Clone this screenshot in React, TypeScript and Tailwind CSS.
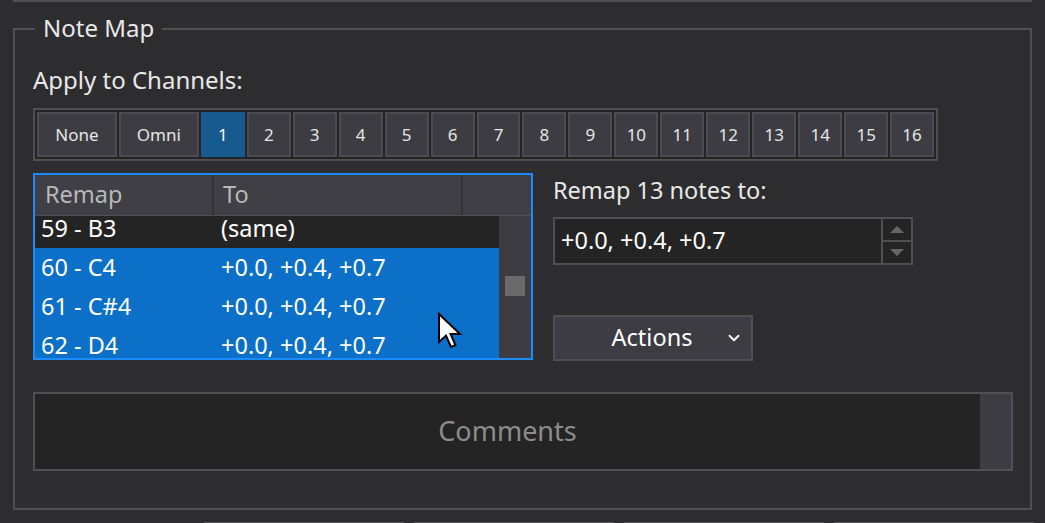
import React from 'react';
import { ChevronDown } from 'lucide-react';

const channels = ['1', '2', '3', '4', '5', '6', '7', '8', '9', '10', '11', '12', '13', '14', '15', '16'];

const rows = [
  { note: '59 - B3', to: '(same)', selected: false },
  { note: '60 - C4', to: '+0.0, +0.4, +0.7', selected: true },
  { note: '61 - C#4', to: '+0.0, +0.4, +0.7', selected: true },
  { note: '62 - D4', to: '+0.0, +0.4, +0.7', selected: true },
];

const ChannelButton: React.FC<{ label: string; active?: boolean; wide?: boolean }> = ({ label, active, wide }) => (
  <div
    className={`flex h-[45px] items-center justify-center border-2 text-[17px] ${wide ? 'w-[80px]' : 'w-[44px]'} ${
      active ? 'border-[#175a90] bg-[#175a90] text-white' : 'border-[#4b4b50] bg-[#3c3c42] text-[#e6e6e6]'
    }`}
  >
    {label}
  </div>
);

const Cursor = () => (
  <svg width="26" height="38" viewBox="0 0 13 19" className="absolute left-[437px] top-[312px]">
    <path
      d="M1 1 L1 15 L4.5 11.8 L7 17.5 L9.2 16.6 L6.8 11 L11.5 11 Z"
      fill="white"
      stroke="black"
      strokeWidth="1"
      strokeLinejoin="miter"
    />
  </svg>
);

export default function App() {
  return (
    <div
      className="relative h-[523px] w-[1045px] overflow-hidden bg-[#2d2d30] text-[#e8e8e8]"
      style={{ fontFamily: '"Noto Sans", "Open Sans", sans-serif' }}
    >
      {/* previous group edge */}
      <div className="mx-[13px] h-[2px] bg-[#505052]" />

      {/* Note Map group */}
      <div className="relative mx-[13px] mt-[26px] h-[482px] border-2 border-[#505052] px-[18px]">
        <div className="absolute left-[20px] top-[-18px] bg-[#2d2d30] px-[8px] text-[24px] leading-[32px]">Note Map</div>

        <div className="mt-[36px] text-[24px] leading-[28px]">Apply to Channels:</div>

        {/* channel selector */}
        <div className="mt-[14px] flex w-[905px] gap-[2px] border-2 border-[#505052] bg-[#242426] p-[2px]">
          <ChannelButton label="None" wide />
          <ChannelButton label="Omni" wide />
          {channels.map((c) => (
            <ChannelButton key={c} label={c} active={c === '1'} />
          ))}
        </div>

        <div className="mt-[12px] flex gap-[20px]">
          {/* remap table */}
          <div className="flex h-[187px] w-[500px] flex-col border-2 border-[#1a8cff] bg-[#242424]">
            <div className="flex h-[41px] border-b border-[#505052] bg-[#3f3f45] text-[23.5px] text-[#b8b8b8]">
              <div className="flex w-[179px] items-center border-r-2 border-[#333336] pl-[10px]">Remap</div>
              <div className="flex w-[249px] items-center border-r-2 border-[#333336] pl-[9px]">To</div>
              <div className="flex-1" />
            </div>
            <div className="flex flex-1 overflow-hidden">
              <div className="flex-1 overflow-hidden">
                <div className="mt-[-6px]">
                  {rows.map((r, i) => (
                    <div
                      key={r.note}
                      className={`flex items-center text-[23.5px] text-white ${i === 0 ? 'h-[38px]' : 'h-[39px]'} ${
                        r.selected ? 'bg-[#0c6fc8]' : 'bg-[#242424]'
                      }`}
                    >
                      <div className="w-[179px] pl-[6px]">{r.note}</div>
                      <div className="pl-[7px]">{r.to}</div>
                    </div>
                  ))}
                </div>
              </div>
              <div className="w-[32px] bg-[#3c3c42] pl-[6px] pt-[60px]">
                <div className="h-[20px] w-[20px] bg-[#6a6a6a]" />
              </div>
            </div>
          </div>

          {/* right side */}
          <div className="flex flex-col">
            <div className="mt-[2px] text-[23.5px] leading-[30px]">Remap 13 notes to:</div>
            <div className="mt-[12px] flex h-[48px] w-[360px] border-2 border-[#505052] bg-[#242424]">
              <div className="flex flex-1 items-center pl-[6px] text-[23.5px] text-white">+0.0, +0.4, +0.7</div>
              <div className="flex w-[30px] flex-col border-l-2 border-[#505052]">
                <div className="flex flex-1 items-center justify-center border-b-2 border-[#505052]">
                  <svg width="16" height="9" viewBox="0 0 16 9">
                    <path d="M8 1 L15 8 L1 8 Z" fill="#666" />
                  </svg>
                </div>
                <div className="flex flex-1 items-center justify-center">
                  <svg width="16" height="9" viewBox="0 0 16 9">
                    <path d="M1 1 L15 1 L8 8 Z" fill="#666" />
                  </svg>
                </div>
              </div>
            </div>
            <div className="mt-[50px] flex h-[46px] w-[200px] items-center border-2 border-[#505052] bg-[#3c3c42] text-[23.5px] text-white">
              <div className="flex-1 pl-[24px] text-center">Actions</div>
              <ChevronDown className="mr-[8px] h-[18px] w-[18px]" strokeWidth={2.5} />
            </div>
          </div>
        </div>

        {/* comments */}
        <div className="mt-[31px] flex h-[79px] w-[980px] border-2 border-[#505052] bg-[#242424]">
          <div className="flex flex-1 items-center justify-center text-[27px] text-[#8c8c8c]">Comments</div>
          <div className="w-[31px] bg-[#3c3c42]" />
        </div>
      </div>

      {/* buttons peeking below */}
      <div className="mt-[12px] flex gap-[10px] pl-[204px]">
        {[0, 1, 2, 3].map((i) => (
          <div key={i} className="h-[4px] w-[200px] bg-[#56565a]" />
        ))}
      </div>

      <Cursor />
    </div>
  );
}
